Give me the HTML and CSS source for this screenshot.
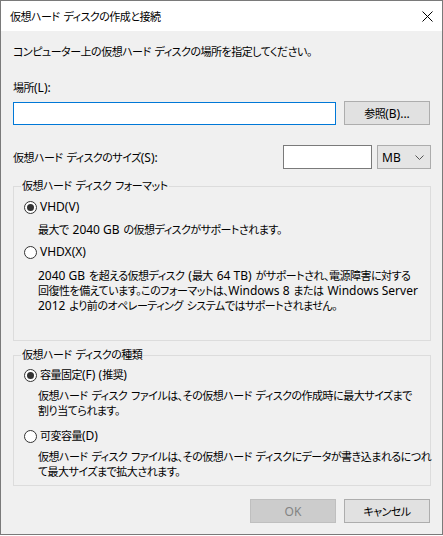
FILE: index.html
```html
<!DOCTYPE html>
<html lang="ja">
<head>
<meta charset="utf-8">
<title>仮想ハード ディスクの作成と接続</title>
<link rel="stylesheet" href="styles.css">
</head>
<body>
<div class="window">
  <div class="titlebar">
    <span class="title">仮想ハード ディスクの作成と接続</span>
    <span class="close" aria-label="閉じる">
      <svg width="11" height="11" viewBox="0 0 11 11"><path d="M0.5 0.5 L10.5 10.5 M10.5 0.5 L0.5 10.5" stroke="#000" stroke-width="1" fill="none"/></svg>
    </span>
  </div>
  <div class="content">
    <p class="intro">コンピューター上の仮想ハード ディスクの場所を指定してください。</p>
    <label class="field-label" for="loc">場所<span class="en">(L):</span></label>
    <div class="loc-row">
      <input id="loc" class="text-input focused" type="text">
      <button class="btn browse">参照<span class="en">(B)...</span></button>
    </div>
    <div class="size-row">
      <label class="size-label" for="size">仮想ハード ディスクのサイズ<span class="en">(S):</span></label>
      <input id="size" class="text-input size-input" type="text">
      <div class="combo">
        <span class="en">MB</span>
        <svg width="9" height="5" viewBox="0 0 9 5"><path d="M0.5 0.5 L4.5 4.5 L8.5 0.5" stroke="#555" stroke-width="1" fill="none"/></svg>
      </div>
    </div>

    <fieldset class="group format">
      <legend>仮想ハード ディスク フォーマット</legend>
      <div class="radio first"><span class="mark checked"></span><span class="en">VHD(V)</span></div>
      <p class="desc">最大で <span class="en">2040 GB</span> の仮想ディスクがサポートされます。</p>
      <div class="radio second"><span class="mark"></span><span class="en">VHDX(X)</span></div>
      <p class="desc after-second"><span class="en">2040 GB</span> を超える仮想ディスク <span class="en">(</span>最大 <span class="en">64 TB)</span> がサポートされ、電源障害に対する<br>回復性を備えています。このフォーマットは、<span class="en">Windows 8</span> または <span class="en">Windows Server</span><br><span class="en">2012</span> より前のオペレーティング システムではサポートされません。</p>
    </fieldset>

    <fieldset class="group kind">
      <legend>仮想ハード ディスクの種類</legend>
      <div class="radio first"><span class="mark checked"></span><span>容量固定<span class="en">(F) (</span>推奨<span class="en">)</span></span></div>
      <p class="desc">仮想ハード ディスク ファイルは、その仮想ハード ディスクの作成時に最大サイズまで<br>割り当てられます。</p>
      <div class="radio second"><span class="mark"></span><span>可変容量<span class="en">(D)</span></span></div>
      <p class="desc">仮想ハード ディスク ファイルは、その仮想ハード ディスクにデータが書き込まれるにつれ<br>て最大サイズまで拡大されます。</p>
    </fieldset>

    <div class="actions">
      <button class="btn ok" disabled><span class="en">OK</span></button>
      <button class="btn">キャンセル</button>
    </div>
  </div>
</div>
</body>
</html>
```
FILE: styles.css
```css
* { box-sizing: border-box; }

html, body {
  margin: 0;
  padding: 0;
  background: #ffffff;
}

body {
  font-family: "Noto Sans", "Noto Sans CJK JP", sans-serif;
  font-size: 11px;
  letter-spacing: -0.5px;
  word-spacing: 1.5px;
  font-feature-settings: "palt";
  color: #000;
}

/* Latin runs keep the regular UI size and spacing */
.en {
  font-size: 12px;
  letter-spacing: 0;
  word-spacing: 0;
}

.window {
  width: 443px;
  height: 535px;
  border: 1px solid #7a7a7a;
  background: #f0f0f0;
  display: flex;
  flex-direction: column;
  overflow: hidden;
}

.titlebar {
  flex: none;
  height: 30px;
  background: #fff;
  display: flex;
  align-items: center;
  justify-content: space-between;
  padding: 0 9px 0 9px;
}

.title {
  line-height: 15px;
  font-size: 11px;
}

.close {
  display: flex;
}

.content {
  padding: 0 11px 0 12px;
  display: flex;
  flex-direction: column;
  white-space: nowrap;
}

.intro {
  margin: 13px 0 0;
  line-height: 15px;
}

.field-label {
  margin-top: 21px;
  line-height: 15px;
}

.loc-row {
  margin-top: 6px;
  display: flex;
  align-items: flex-end;
  justify-content: space-between;
}

.text-input {
  height: 23px;
  border: 1px solid #7a7a7a;
  background: #fff;
  padding: 0 3px;
  font: inherit;
  outline: none;
  margin: 0;
}

.text-input.focused {
  width: 323px;
  border-color: #0078d7;
}

.btn {
  height: 24px;
  width: 86px;
  border: 1px solid #adadad;
  background: #e1e1e1;
  font: inherit;
  letter-spacing: inherit;
  color: #000;
  padding: 0;
  margin: 0;
}

.browse {
  margin-right: 1px;
}

.size-row {
  margin-top: 20px;
  display: flex;
  align-items: center;
}

.size-label {
  flex: 1;
  line-height: 15px;
}

.size-input {
  width: 89px;
  height: 24px;
}

.combo {
  flex: none;
  width: 54px;
  height: 24px;
  margin-left: 5px;
  border: 1px solid #acacac;
  background: #e5e5e5;
  display: flex;
  align-items: center;
  justify-content: space-between;
  padding: 0 6px 0 4px;
}

.group {
  margin: 0;
  padding: 0 10px;
  border: 1px solid #dcdcdc;
  min-width: 0;
}

.group legend {
  padding: 0 1px;
  margin-left: -3px;
  line-height: 14px;
}

.format {
  margin-top: 10px;
  padding-top: 6px;
  padding-bottom: 27px;
}

.kind {
  margin-top: 7px;
  padding-top: 5px;
  padding-bottom: 6px;
}

.radio {
  display: flex;
  align-items: center;
  gap: 3px;
  height: 16px;
  line-height: 16px;
}

.mark {
  flex: none;
  width: 13px;
  height: 13px;
  border: 1px solid #333;
  border-radius: 50%;
  background: #fff;
  display: flex;
  align-items: center;
  justify-content: center;
}

.mark.checked::after {
  content: "";
  width: 7px;
  height: 7px;
  border-radius: 50%;
  background: #333;
}

.desc {
  margin: 7px 0 0 14px;
  line-height: 15px;
}

.format .second { margin-top: 7px; }
.format .after-second { margin-top: 8px; }

.kind .desc { margin-top: 5px; }
.kind .second { margin-top: 10px; }

.actions {
  margin-top: 13px;
  display: flex;
  justify-content: flex-end;
  gap: 8px;
  padding-right: 1px;
}

.ok {
  background: #cccccc;
  border-color: #bfbfbf;
  color: #838383;
}
```
